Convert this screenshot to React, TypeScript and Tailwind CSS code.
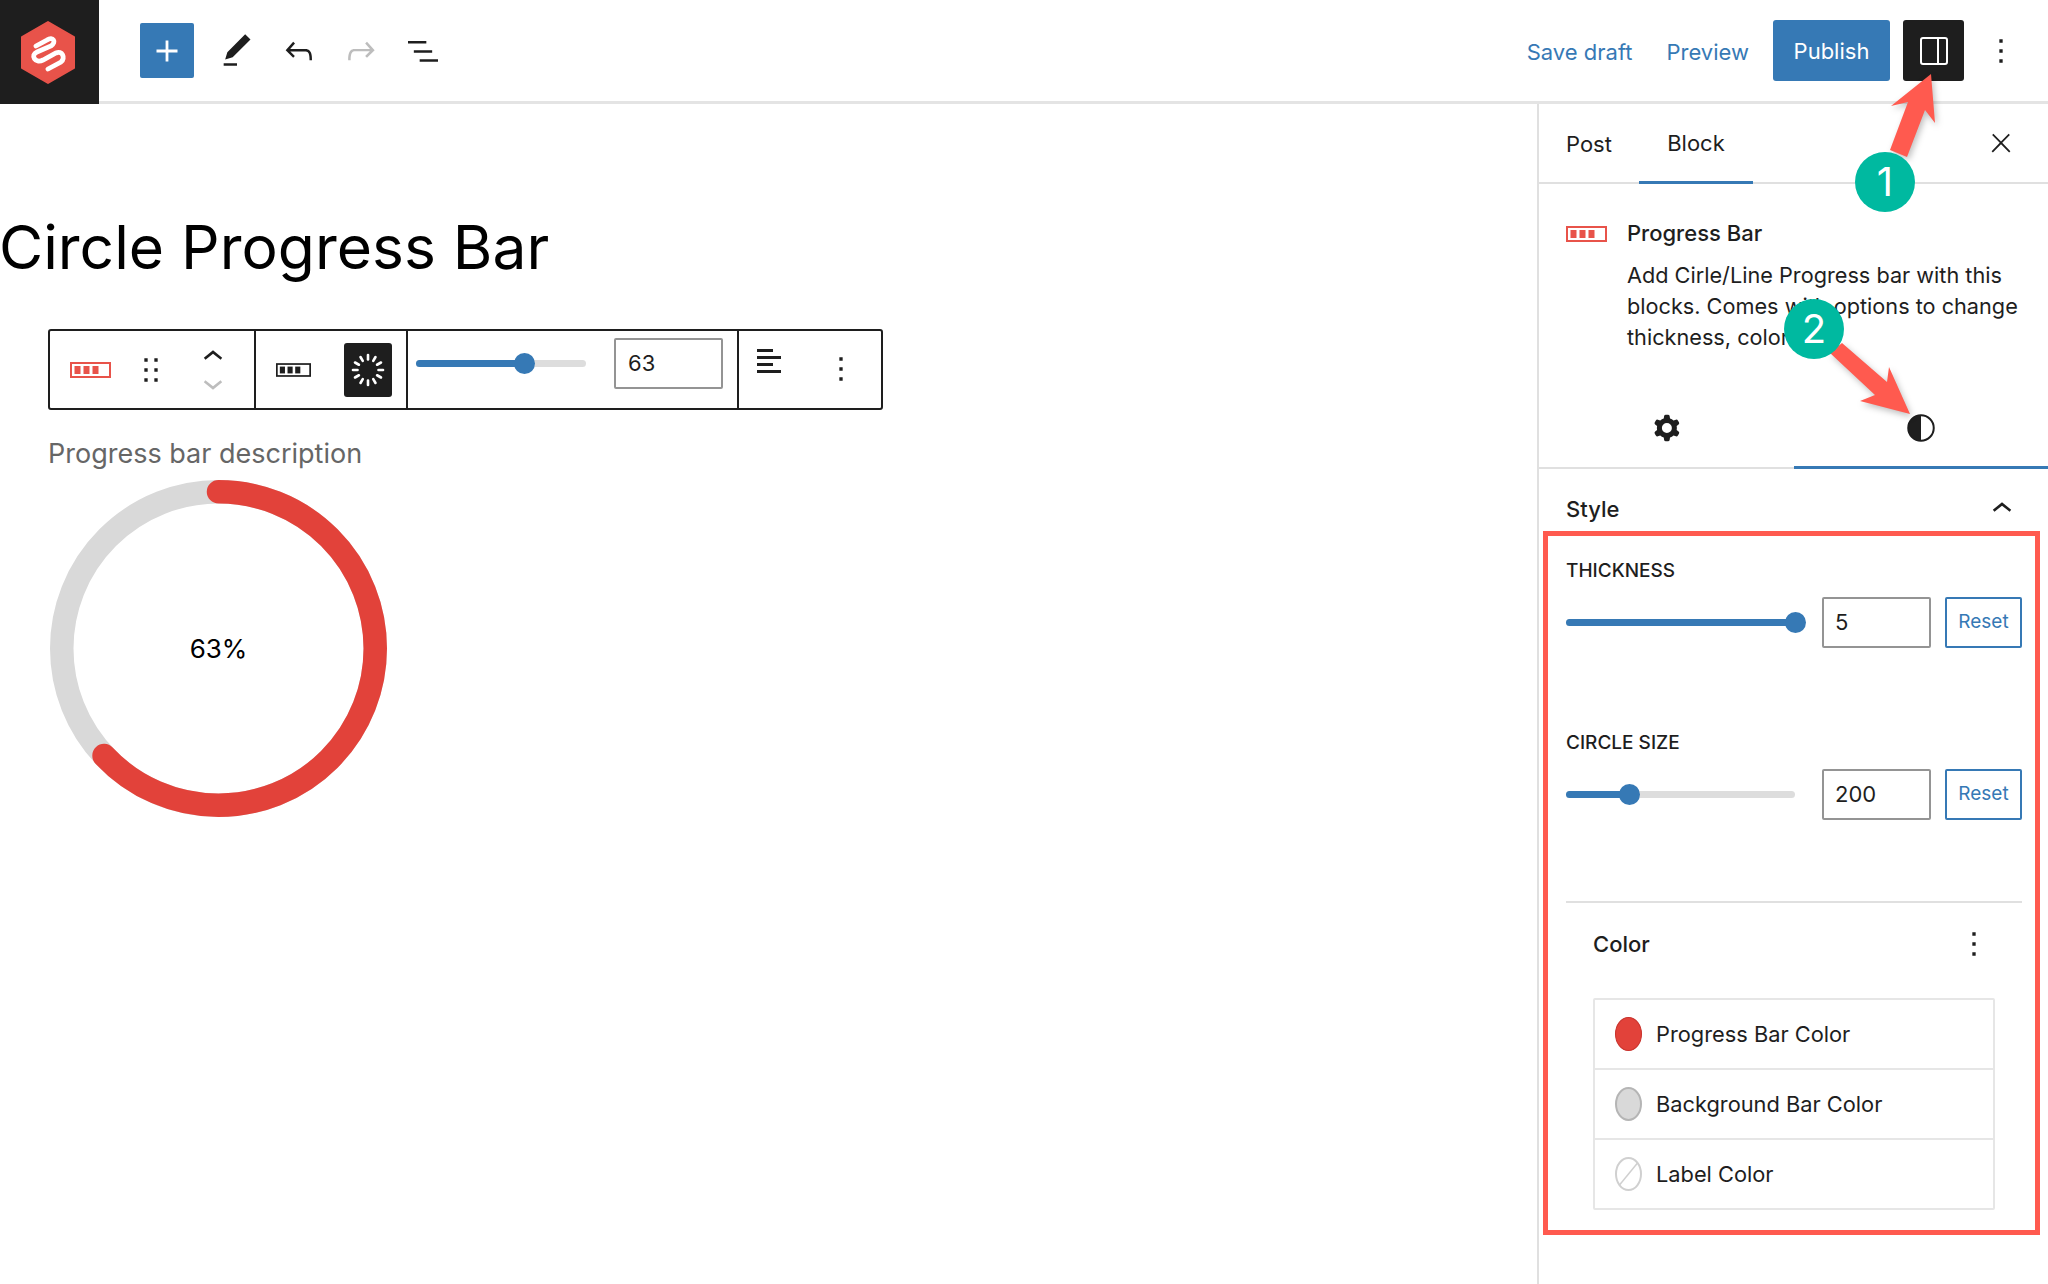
import type { ReactNode } from 'react'

const ink = '#1e1e1e'
const red = '#e2423a'

function WpIcon({ d, size = 40, color = ink }: { d: string; size?: number; color?: string }) {
  return (
    <svg width={size} height={size} viewBox="0 0 24 24" fill={color} className="shrink-0">
      <path d={d} fillRule="evenodd" />
    </svg>
  )
}

const icons = {
  plus: 'M18 11.2h-5.2V6h-1.6v5.2H6v1.6h5.2V18h1.6v-5.2H18z',
  edit: 'M20.1 5.1L16.9 2 6.2 12.7l-1.3 4.4 4.5-1.3L20.1 5.1zM4 20.8h8v-1.5H4v1.5z',
  undo: 'M18.3 11.7c-.6-.6-1.4-.9-2.3-.9H6.7l2.9-3.3-1.1-1-4.5 5L8.5 16l1-1-2.7-2.7H16c.5 0 .9.2 1.3.5 1 1 1 3.4 1 4.5v.3h1.5v-.2c0-1.5 0-4.3-1.5-5.7z',
  redo: 'M15.6 6.5l-1.1 1 2.9 3.3H8c-.9 0-1.7.3-2.3.9-1.4 1.5-1.4 4.2-1.4 5.6v.2h1.5v-.3c0-1.1 0-3.5 1-4.5.3-.3.7-.5 1.3-.5h9.2L14.5 15l1.1 1.1 4.6-4.6-4.6-5z',
  list: 'M3 6h11v1.5H3V6zm3.5 5.5h11V13h-11v-1.5zM21 17H10v1.5h11V17z',
  more: 'M13 19h-2v-2h2v2zm0-6h-2v-2h2v2zm0-6h-2V5h2v2z',
  close: 'M13 11.8l6.1-6.3-1-1-6.1 6.2-6.1-6.2-1 1 6.1 6.3-6.5 6.7 1 1 6.5-6.6 6.5 6.6 1-1z',
  up: 'M6.5 12.4L12 8l5.5 4.4-.9 1.2L12 10l-4.5 3.6-1-1.2z',
  down: 'M17.5 11.6L12 16l-5.5-4.4.9-1.2L12 14l4.5-3.6 1 1.2z',
  drag: 'M8 7h2V5H8v2zm0 6h2v-2H8v2zm0 6h2v-2H8v2zm6-14v2h2V5h-2zm0 8h2v-2h-2v2zm0 6h2v-2h-2v2z',
  cog: 'M10.289 4.836A1 1 0 0111.275 4h1.306a1 1 0 01.987.836l.244 1.466c.787.26 1.503.679 2.108 1.218l1.393-.522a1 1 0 011.216.437l.653 1.13a1 1 0 01-.23 1.273l-1.148.944a6.025 6.025 0 010 2.435l1.149.946a1 1 0 01.23 1.272l-.653 1.13a1 1 0 01-1.216.437l-1.394-.522c-.605.54-1.32.958-2.108 1.218l-.244 1.466a1 1 0 01-.987.836h-1.306a1 1 0 01-.986-.836l-.244-1.466a5.995 5.995 0 01-2.108-1.218l-1.394.522a1 1 0 01-1.217-.436l-.653-1.131a1 1 0 01.23-1.272l1.149-.946a6.026 6.026 0 010-2.435l-1.148-.944a1 1 0 01-.23-1.272l.653-1.131a1 1 0 011.217-.437l1.393.522a5.994 5.994 0 012.108-1.218l.244-1.466zM14.929 12a3 3 0 11-6 0 3 3 0 016 0z',
}

function BarIcon({ color, width = 41, height = 16 }: { color: string; width?: number; height?: number }) {
  return (
    <svg width={width} height={height} viewBox="0 0 41 16" className="shrink-0">
      <rect x="1" y="1" width="39" height="14" fill="none" stroke={color} strokeWidth="2" />
      <rect x="4.5" y="4" width="6" height="8" fill={color} />
      <rect x="13.5" y="4" width="6" height="8" fill={color} />
      <rect x="22.5" y="4" width="6" height="8" fill={color} />
    </svg>
  )
}

function Logo() {
  return (
    <svg width="66" height="72" viewBox="0 0 66 72">
      <path d="M33 6 L59 21 V52 L33 67 L7 52 V21 Z" fill="#e8534a" stroke="#e8534a" strokeWidth="2" strokeLinejoin="round" />
      <path
        d="M33 53 L46 46 C51 42 47 34 41 37 L28 44 C20 48 15 39 22 36 L36 30 C42 26 38 20 32 24 L21 30"
        fill="none"
        stroke="#fff"
        strokeWidth="4.8"
        strokeLinecap="round"
      />
    </svg>
  )
}

function Spinner() {
  const spokes = Array.from({ length: 12 }, (_, i) => i * 30)
  return (
    <svg width="36" height="36" viewBox="0 0 36 36">
      {spokes.map((a) => (
        <line key={a} x1="18" y1="3" x2="18" y2="7.5" stroke="#fff" strokeWidth="2.6" strokeLinecap="round" transform={`rotate(${a} 18 18)`} />
      ))}
    </svg>
  )
}

function Slider({ width, value, thumb }: { width: number; value: number; thumb: number }) {
  return (
    <div className="relative h-[7px] rounded-full bg-[#dddddd]" style={{ width }}>
      <div className="h-full rounded-full bg-[#3679b5]" style={{ width: value }} />
      <div className="absolute top-[-7px] h-[21px] w-[21px] rounded-full bg-[#3679b5]" style={{ left: thumb - 10 }} />
    </div>
  )
}

function NumberBox({ children, className }: { children: ReactNode; className: string }) {
  return (
    <div className={`flex shrink-0 items-center rounded-[2px] border-2 border-[#949494] bg-white text-[22px] text-[#1e1e1e] ${className}`}>
      {children}
    </div>
  )
}

function Control({ label, value, sliderWidth, fill, thumb, className }: { label: string; value: string; sliderWidth: number; fill: number; thumb: number; className: string }) {
  return (
    <div className={className}>
      <div className="text-[19px] leading-[26px] font-medium text-[#1e1e1e]">{label}</div>
      <div className="mt-[13px] flex h-[51px] items-center">
        <div className="w-[256px] shrink-0">
          <Slider width={sliderWidth} value={fill} thumb={thumb} />
        </div>
        <NumberBox className="h-[51px] w-[109px] pl-[11px]">{value}</NumberBox>
        <div className="ml-[14px] flex h-[51px] w-[77px] shrink-0 items-center justify-center rounded-[2px] border-2 border-[#3679b5] text-[19px] text-[#3679b5]">
          Reset
        </div>
      </div>
    </div>
  )
}

function ColorRow({ label, swatch, last }: { label: string; swatch: ReactNode; last?: boolean }) {
  return (
    <div className={`flex items-center pl-[20px] text-[21.8px] text-[#1e1e1e] ${last ? 'h-[68px]' : 'h-[70px] border-b-2 border-[#e6e6e6]'}`}>
      {swatch}
      <span className="ml-[14px]">{label}</span>
    </div>
  )
}

function Editor() {
  return (
    <main className="min-w-0 flex-1">
      <h1 className="mt-[102px] -ml-[1px] text-[60.5px] leading-[82px] font-normal whitespace-nowrap text-black">Circle Progress Bar</h1>
      <div className="mt-[41px] ml-[48px] flex h-[81px] w-[835px] items-stretch rounded-[3px] border-2 border-[#1e1e1e]">
        <div className="flex w-[206px] items-center border-r-2 border-[#1e1e1e]">
          <div className="ml-[20px]">
            <BarIcon color="#e8534a" />
          </div>
          <div className="ml-[20px]">
            <WpIcon d={icons.drag} />
          </div>
          <div className="ml-[22px] flex flex-col items-center">
            <div className="-mb-[14px]">
              <WpIcon d={icons.up} />
            </div>
            <WpIcon d={icons.down} color="#bdbdbd" />
          </div>
        </div>
        <div className="flex w-[152px] items-center border-r-2 border-[#1e1e1e]">
          <div className="ml-[20px]">
            <BarIcon color={ink} width={35} height={14} />
          </div>
          <div className="ml-[33px] flex h-[54px] w-[48px] items-center justify-center rounded-[3px] bg-[#1e1e1e]">
            <Spinner />
          </div>
        </div>
        <div className="flex w-[331px] items-start border-r-2 border-[#1e1e1e] pt-[7px]">
          <div className="mt-[22px] ml-[8px]">
            <Slider width={170} value={108} thumb={108} />
          </div>
          <NumberBox className="ml-[28px] h-[51px] w-[109px] pl-[12px]">63</NumberBox>
        </div>
        <div className="flex flex-1 items-start">
          <svg width="24" height="24" viewBox="0 0 24 24" className="mt-[18px] ml-[18px]">
            <rect x="0" y="0" width="16" height="3" fill={ink} />
            <rect x="0" y="7" width="24" height="3" fill={ink} />
            <rect x="0" y="14" width="16" height="3" fill={ink} />
            <rect x="0" y="21" width="24" height="3" fill={ink} />
          </svg>
          <div className="mt-[18px] ml-[40px]">
            <WpIcon d={icons.more} />
          </div>
        </div>
      </div>
      <p className="mt-[26px] ml-[48px] text-[27px] leading-[36px] text-[#666666]">Progress bar description</p>
      <div className="relative mt-[8px] ml-[50px] h-[337px] w-[337px]">
        <svg width="337" height="337" viewBox="0 0 337 337">
          <circle cx="168.5" cy="168.5" r="156.75" fill="none" stroke="#d9d9d9" strokeWidth="23.5" />
          <circle
            cx="168.5"
            cy="168.5"
            r="156.75"
            fill="none"
            stroke={red}
            strokeWidth="23.5"
            strokeLinecap="round"
            strokeDasharray="620.5 984.9"
            transform="rotate(-90 168.5 168.5)"
          />
        </svg>
        <div className="absolute inset-0 flex items-center justify-center text-[26px] text-black">63%</div>
      </div>
    </main>
  )
}

function Sidebar() {
  return (
    <aside className="h-full w-[511px] shrink-0 border-l-2 border-[#e0e0e0]">
      <div className="flex h-[80px] items-stretch border-b-2 border-[#e0e0e0] text-[22px] text-[#1e1e1e]">
        <div className="flex items-center pt-[2px] pl-[27px]">Post</div>
        <div className="-mb-[2px] ml-[27px] flex w-[114px] items-center justify-center border-b-[3px] border-[#3679b5] pt-[2px]">Block</div>
        <div className="ml-auto flex items-center pr-[32px]">
          <WpIcon d={icons.close} size={30} />
        </div>
      </div>
      <div className="flex items-start pt-[34px] pl-[27px]">
        <div className="mt-[8px]">
          <BarIcon color="#e8534a" />
        </div>
        <div className="ml-[20px] w-[420px] text-[21.7px] leading-[31px] text-[#1e1e1e]">
          <div className="text-[22px] font-medium">Progress Bar</div>
          <p className="mt-[11px]">Add Cirle/Line Progress bar with this blocks. Comes with options to change thickness, color</p>
        </div>
      </div>
      <div className="mt-[36px] flex h-[80px] border-b-2 border-[#e0e0e0]">
        <div className="flex w-[255px] items-center justify-center">
          <WpIcon d={icons.cog} />
        </div>
        <div className="-mb-[2px] flex flex-1 items-center justify-center border-b-[3px] border-[#3679b5]">
          <svg width="28" height="28" viewBox="0 0 28 28">
            <circle cx="14" cy="14" r="12.75" fill="none" stroke={ink} strokeWidth="2" />
            <path d="M14 1.25 A12.75 12.75 0 0 0 14 26.75 Z" fill={ink} />
          </svg>
        </div>
      </div>
      <div className="flex h-[62px] items-center justify-between pt-[18px] pr-[26px] pl-[27px]">
        <span className="text-[22px] font-medium text-[#1e1e1e]">Style</span>
        <WpIcon d={icons.up} />
      </div>
      <div className="ml-[4px] h-[704px] w-[497px] border-[5px] border-[#ff5a4f] pt-[22px] pr-[13px] pl-[18px]">
        <Control label="THICKNESS" value="5" sliderWidth={230} fill={230} thumb={229} className="" />
        <Control label="CIRCLE SIZE" value="200" sliderWidth={229} fill={63} thumb={63} className="mt-[82px]" />
        <div className="mt-[81px] border-t-2 border-[#e0e0e0]">
          <div className="mt-[20px] flex h-[42px] items-center justify-between pr-[28px] pl-[27px]">
            <span className="text-[22px] font-medium text-[#1e1e1e]">Color</span>
            <WpIcon d={icons.more} />
          </div>
          <div className="mt-[33px] ml-[27px] w-[402px] rounded-[2px] border-2 border-[#e6e6e6]">
            <ColorRow label="Progress Bar Color" swatch={<div className="h-[34px] w-[27px] rounded-[50%] border border-[#c9322c] bg-[#e2423a]" />} />
            <ColorRow label="Background Bar Color" swatch={<div className="h-[34px] w-[27px] rounded-[50%] border-2 border-[#b5b5b5] bg-[#d9d9d9]" />} />
            <ColorRow
              last
              label="Label Color"
              swatch={
                <svg width="27" height="34" viewBox="0 0 27 34">
                  <ellipse cx="13.5" cy="17" rx="12.5" ry="16" fill="#fff" stroke="#d0d0d0" strokeWidth="2" />
                  <line x1="4.5" y1="28" x2="22.5" y2="6" stroke="#d0d0d0" strokeWidth="1.5" />
                </svg>
              }
            />
          </div>
        </div>
      </div>
    </aside>
  )
}

export default function App() {
  return (
    <div className="relative h-[1284px] w-[2048px] overflow-hidden bg-white font-['Inter',sans-serif]">
      <header className="flex h-[104px] items-stretch border-b-[3px] border-[#e4e4e4]">
        <div className="-mb-[3px] flex w-[99px] items-center bg-[#1e1e1e] pl-[15px]">
          <Logo />
        </div>
        <div className="flex items-center">
          <div className="ml-[41px] flex h-[55px] w-[54px] items-center justify-center rounded-[2px] bg-[#3679b5]">
            <WpIcon d={icons.plus} size={42} color="#fff" />
          </div>
          <div className="ml-[23px] flex items-center gap-[22px]">
            <WpIcon d={icons.edit} />
            <WpIcon d={icons.undo} />
            <WpIcon d={icons.redo} color="#bdbdbd" />
            <WpIcon d={icons.list} />
          </div>
        </div>
        <div className="ml-auto flex items-center text-[22px] text-[#3679b5]">
          <span className="pt-[3px]">Save draft</span>
          <span className="ml-[34px] pt-[3px]">Preview</span>
          <div className="ml-[24px] flex h-[61px] w-[117px] items-center justify-center rounded-[3px] bg-[#3679b5] pt-[2px] text-white">Publish</div>
          <div className="ml-[13px] flex h-[61px] w-[61px] items-center justify-center rounded-[3px] bg-[#1e1e1e]">
            <svg width="28" height="28" viewBox="0 0 28 28" fill="none" stroke="#fff" strokeWidth="2">
              <rect x="1" y="1" width="26" height="26" rx="2" />
              <line x1="18" y1="1" x2="18" y2="27" />
            </svg>
          </div>
          <div className="mr-[27px] ml-[17px]">
            <WpIcon d={icons.more} />
          </div>
        </div>
      </header>
      <div className="flex h-[1180px]">
        <Editor />
        <Sidebar />
      </div>

      {/* callouts drawn over the screenshot */}
      <svg width="2048" height="1284" viewBox="0 0 2048 1284" className="pointer-events-none absolute inset-0 drop-shadow-[2px_3px_3px_rgba(0,0,0,0.25)]">
        <path d="M1931 74 L1891 106 L1908 102 L1890 150 L1907 157 L1925 110 L1935 123 Z" fill="#ff5a4f" />
        <path d="M1830 353 L1842 343 L1887 382 L1889 367 L1910 414 L1860 401 L1875 395 Z" fill="#ff5a4f" />
      </svg>
      <div className="absolute top-[152px] left-[1855px] flex h-[60px] w-[60px] items-center justify-center rounded-full bg-[#00b9a0] text-[40px] text-white">1</div>
      <div className="absolute top-[299px] left-[1784px] flex h-[60px] w-[60px] items-center justify-center rounded-full bg-[#00b9a0] text-[40px] text-white">2</div>
    </div>
  )
}
